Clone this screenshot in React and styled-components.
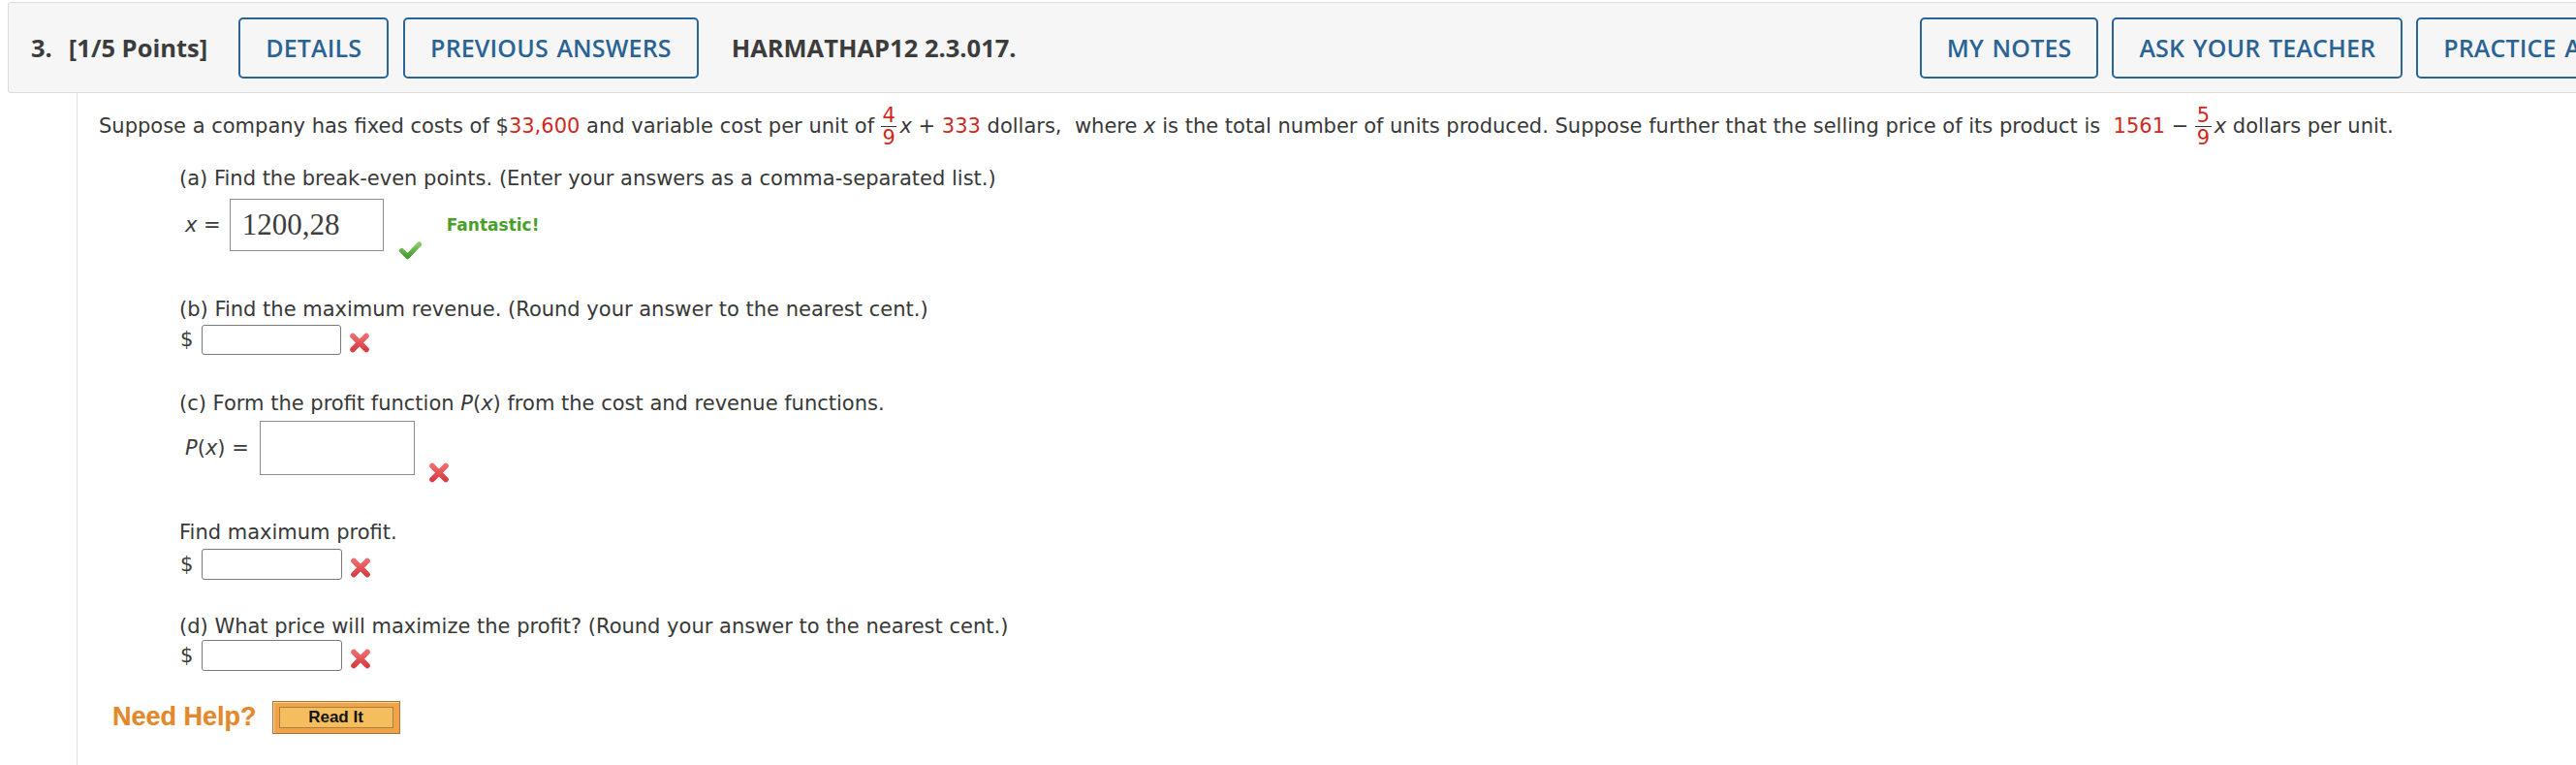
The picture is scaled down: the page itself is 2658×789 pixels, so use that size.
import React from "react";
import styled, { createGlobalStyle } from "styled-components";

const Global = createGlobalStyle`
  html, body { margin: 0; padding: 0; background: #ffffff; overflow: hidden; }
  * { box-sizing: border-box; }
`;

const Page = styled.div`
  width: 2819px;
  display: flex;
  flex-direction: column;
`;

const Header = styled.header`
  display: flex;
  align-items: center;
  height: 94px;
  margin: 2px 0 0 8px;
  padding: 0 24px 0 23px;
  background: #f6f6f6;
  border: 1px solid #dcdcdc;
  border-radius: 3px;
  font-family: "Open Sans", sans-serif;
  white-space: nowrap;
`;

const QTitle = styled.div`
  display: flex;
  gap: 17px;
  font-size: 25.5px;
  font-weight: 700;
  color: #3c3c3c;
  margin-right: 32px;
`;

const Group = styled.div`
  display: flex;
  align-items: center;
  gap: ${(p) => p.$gap}px;
  margin-left: ${(p) => (p.$right ? "auto" : "0")};
`;

const HeaderButton = styled.button`
  height: 63px;
  padding: 0 26px;
  border: 2px solid #2b6597;
  border-radius: 5px;
  background: transparent;
  color: #2a6394;
  font-family: "Open Sans", sans-serif;
  font-size: 25px;
  font-weight: 600;
  letter-spacing: 0.15px;
  word-spacing: 2px;
  white-space: nowrap;
`;

const Code = styled.div`
  margin-left: 34px;
  font-size: 25.5px;
  font-weight: 700;
  color: #3c3c3c;
`;

const Main = styled.main`
  margin-left: 79px;
  min-height: 693px;
  padding-left: 22px;
  border-left: 1px solid #dedede;
  font-family: "DejaVu Sans", Verdana, sans-serif;
  font-size: 21px;
  color: #383838;
  display: flex;
  flex-direction: column;
  align-items: flex-start;
`;

const Paragraph = styled.p`
  margin: 12px 0 0;
  line-height: 44px;
  white-space: nowrap;
`;

const Red = styled.span`
  color: #d0281e;
`;

const Var = styled.i`
  font-style: oblique;
`;

const Frac = styled.span`
  display: inline-flex;
  flex-direction: column;
  align-items: center;
  vertical-align: middle;
  margin: 0 3px 0 ${(p) => p.$ml || 0}px;
  color: #d0281e;
`;

const Num = styled.span`
  line-height: 19px;
  padding: 0 1.5px 1px;
  border-bottom: 1px solid #333;
`;

const Den = styled.span`
  line-height: 21px;
  padding: 1px 1.5px 0;
`;

const PartTitle = styled.div`
  margin: ${(p) => p.$mt}px 0 0 83px;
  line-height: 26px;
  white-space: nowrap;
`;

const AnswerRow = styled.div`
  display: flex;
  align-items: center;
  height: ${(p) => p.$h}px;
  margin: ${(p) => p.$mt}px 0 0 83px;
`;

const Label = styled.span`
  margin: 0 ${(p) => p.$mr}px 0 ${(p) => p.$ml || 0}px;
  color: #3c3c3c;
  white-space: nowrap;
`;

const AnswerBox = styled.div`
  width: ${(p) => p.$w}px;
  height: 100%;
  border: 1px solid ${(p) => (p.$round ? "#7a7a7a" : "#8c8c8c")};
  border-radius: ${(p) => (p.$round ? 3 : 0)}px;
  background: #fff;
  display: flex;
  align-items: center;
  padding-left: 12px;
  font-family: "Liberation Serif", "Times New Roman", serif;
  font-size: 31px;
  color: #3d3d3d;
`;

const StatusIcon = styled.svg`
  flex: none;
  align-self: flex-end;
  margin-left: ${(p) => p.$ml}px;
  margin-bottom: ${(p) => p.$mb}px;
`;

const Feedback = styled.span`
  margin-left: 25px;
  font-weight: 700;
  font-size: 17px;
  color: #4a9f2a;
`;

const HelpRow = styled.div`
  display: flex;
  align-items: center;
  gap: 16px;
  margin: 31px 0 0 14px;
`;

const NeedHelp = styled.span`
  font-family: "Liberation Sans", Arial, sans-serif;
  font-weight: 700;
  font-size: 27px;
  color: #e3892d;
  text-shadow: 0 0 1px rgba(227, 137, 45, 0.45);
`;

const ReadIt = styled.div`
  display: flex;
  width: 132px;
  height: 34px;
  padding: 5px 6px;
  background: #f1a447;
  border: 1px solid #a9743a;
  box-shadow: inset 1px 1px 0 #fbd7a0;
`;

const ReadItInner = styled.div`
  flex: 1;
  display: flex;
  align-items: center;
  justify-content: center;
  background: #f4bd5d;
  border: 1px solid #a98043;
  font-family: "Liberation Sans", Arial, sans-serif;
  font-weight: 700;
  font-size: 17px;
  color: #151515;
`;

function Cross({ ml, mb }) {
  return (
    <StatusIcon $ml={ml} $mb={mb} width="22" height="21" viewBox="0 0 22 21">
      <defs>
        <linearGradient id="xg" x1="0" y1="0" x2="0" y2="1">
          <stop offset="0" stopColor="#ef6a6c" />
          <stop offset="1" stopColor="#d83d42" />
        </linearGradient>
      </defs>
      <path d="M4 3.5 L18 17.5 M18 3.5 L4 17.5" stroke="url(#xg)" strokeWidth="5.6" strokeLinecap="round" fill="none" />
    </StatusIcon>
  );
}

function Check({ ml, mb }) {
  return (
    <StatusIcon $ml={ml} $mb={mb} width="25" height="20" viewBox="0 0 25 20">
      <defs>
        <linearGradient id="cg" x1="0" y1="0" x2="0" y2="1">
          <stop offset="0" stopColor="#86c96a" />
          <stop offset="1" stopColor="#479a35" />
        </linearGradient>
      </defs>
      <path d="M3.5 10.5 L9.5 16.5 L21.5 4" stroke="url(#cg)" strokeWidth="5.2" strokeLinecap="round" strokeLinejoin="round" fill="none" />
    </StatusIcon>
  );
}

export default function App() {
  return (
    <Page>
      <Global />
      <Header>
        <QTitle>
          <span>3.</span>
          <span>[1/5 Points]</span>
        </QTitle>
        <Group $gap={15}>
          <HeaderButton>DETAILS</HeaderButton>
          <HeaderButton>PREVIOUS ANSWERS</HeaderButton>
        </Group>
        <Code>HARMATHAP12 2.3.017.</Code>
        <Group $gap={14} $right>
          <HeaderButton>MY NOTES</HeaderButton>
          <HeaderButton>ASK YOUR TEACHER</HeaderButton>
          <HeaderButton>PRACTICE ANOTHER</HeaderButton>
        </Group>
      </Header>
      <Main>
        <Paragraph>
          Suppose a company has fixed costs of $<Red>33,600</Red> and variable cost per unit of
          <Frac $ml={7}>
            <Num>4</Num>
            <Den>9</Den>
          </Frac>
          <Var>x</Var> + <Red>333</Red> dollars,{"\u00a0"} where <Var>x</Var> is the total number of units
          produced. Suppose further that the selling price of its product is{"\u00a0"} <Red>1561</Red> −
          <Frac $ml={7}>
            <Num>5</Num>
            <Den>9</Den>
          </Frac>
          <Var>x</Var> dollars per unit.
        </Paragraph>

        <PartTitle $mt={18}>(a) Find the break-even points. (Enter your answers as a comma-separated list.)</PartTitle>
        <AnswerRow $h={54} $mt={8}>
          <Label $ml={6} $mr={9}>
            <Var>x</Var> =
          </Label>
          <AnswerBox $w={159}>1200,28</AnswerBox>
          <Check ml={15} mb={-9} />
          <Feedback>Fantastic!</Feedback>
        </AnswerRow>

        <PartTitle $mt={47}>(b) Find the maximum revenue. (Round your answer to the nearest cent.)</PartTitle>
        <AnswerRow $h={31} $mt={3}>
          <Label $ml={1} $mr={9}>$</Label>
          <AnswerBox $w={144} $round />
          <Cross ml={8} mb={2} />
        </AnswerRow>

        <PartTitle $mt={37}>
          (c) Form the profit function <Var>P</Var>(<Var>x</Var>) from the cost and revenue functions.
        </PartTitle>
        <AnswerRow $h={56} $mt={5}>
          <Label $ml={6} $mr={11}>
            <Var>P</Var>(<Var>x</Var>) =
          </Label>
          <AnswerBox $w={160} />
          <Cross ml={14} mb={-8} />
        </AnswerRow>

        <PartTitle $mt={46}>Find maximum profit.</PartTitle>
        <AnswerRow $h={32} $mt={4}>
          <Label $ml={1} $mr={9}>$</Label>
          <AnswerBox $w={145} $round />
          <Cross ml={8} mb={2} />
        </AnswerRow>

        <PartTitle $mt={35}>(d) What price will maximize the profit? (Round your answer to the nearest cent.)</PartTitle>
        <AnswerRow $h={32} $mt={1}>
          <Label $ml={1} $mr={9}>$</Label>
          <AnswerBox $w={145} $round />
          <Cross ml={8} mb={2} />
        </AnswerRow>

        <HelpRow>
          <NeedHelp>Need Help?</NeedHelp>
          <ReadIt>
            <ReadItInner>Read It</ReadItInner>
          </ReadIt>
        </HelpRow>
      </Main>
    </Page>
  );
}
